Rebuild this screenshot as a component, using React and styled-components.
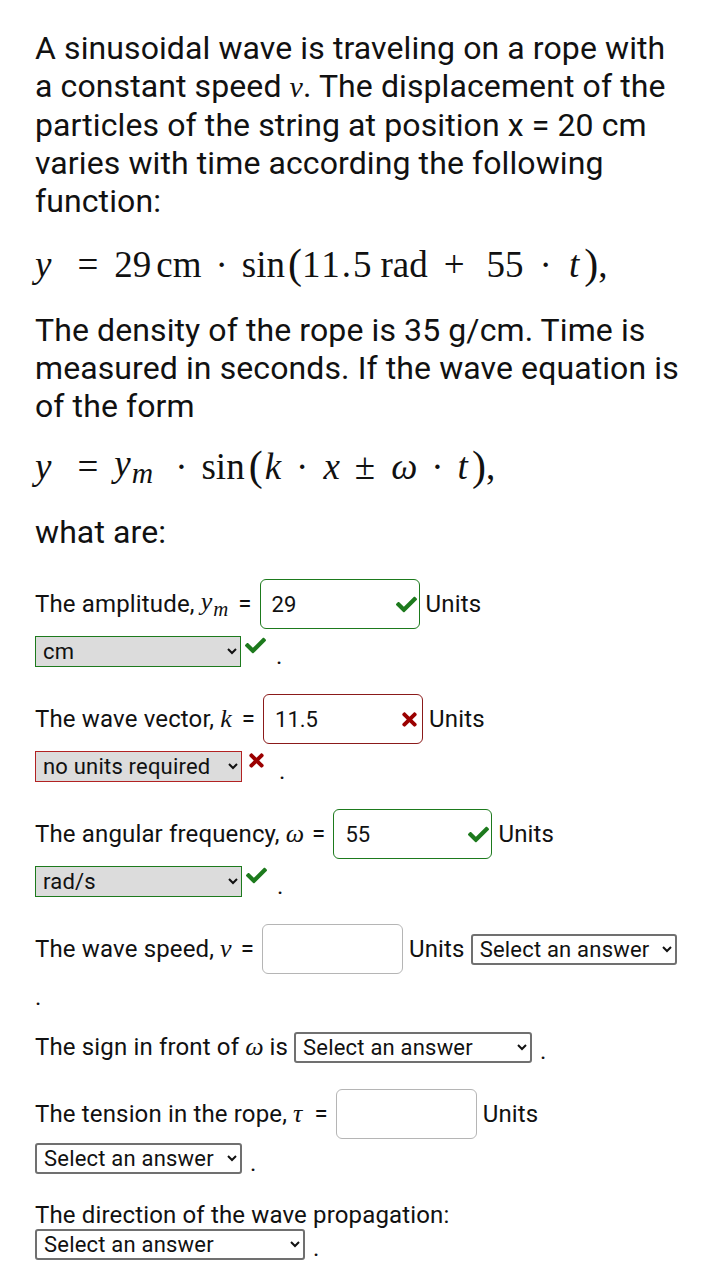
import React from "react";
import styled, { createGlobalStyle } from "styled-components";
import { FaCheck, FaTimes } from "react-icons/fa";

const GlobalStyle = createGlobalStyle`
  body {
    margin: 0;
    background: #fff;
    color: #111;
    font-family: Roboto, "Noto Sans", sans-serif;
  }
`;

const Page = styled.div`
  padding: 29px 35px 20px 35px;
`;

const Para = styled.p`
  margin: ${(p) => p.$mt || 0}px 0 0 0;
  font-size: 32px;
  letter-spacing: 0.1px;
  line-height: 38px;
  white-space: nowrap;
`;

const Equation = styled.div`
  margin-top: ${(p) => p.$mt || 0}px;
  height: 50px;
  display: flex;
  align-items: center;
  font-family: "Liberation Serif", "DejaVu Serif", serif;
  font-size: 37px;
  white-space: nowrap;
`;

const Tok = styled.span`
  margin-left: ${(p) => p.$ml || 0}px;
  font-style: ${(p) => (p.$i ? "italic" : "normal")};
  font-size: ${(p) => p.$size || "inherit"};
  letter-spacing: ${(p) => p.$ls || 0}px;
`;

const Sub = styled.sub`
  font-size: 0.8em;
  font-style: italic;
  vertical-align: -0.25em;
  margin-left: 1px;
`;

const InlineVar = styled.span`
  font-family: "Liberation Serif", "DejaVu Serif", serif;
  font-style: italic;
  font-size: ${(p) => p.$size || 26}px;
  margin: 0 ${(p) => p.$mr ?? 8}px 0 ${(p) => p.$ml ?? 6}px;
  letter-spacing: 0;
`;

const Questions = styled.div`
  margin-top: 28px;
  font-size: 24px;
  letter-spacing: 0.15px;
`;

const Question = styled.div`
  margin-top: ${(p) => p.$mt ?? 27}px;
`;

const Line = styled.div`
  display: flex;
  align-items: center;
  height: ${(p) => p.$h || 26}px;
  margin-top: ${(p) => p.$mt || 0}px;
  white-space: nowrap;
`;

const statusColor = {
  ok: "#1d7a1d",
  bad: "#8b1a1a",
  none: "#b5b5b5",
};

const InputBox = styled.div`
  display: flex;
  align-items: center;
  box-sizing: border-box;
  width: ${(p) => p.$w}px;
  height: 50px;
  border: 1px solid ${(p) => statusColor[p.$status]};
  border-radius: 6px;
  padding: 0 2px 0 11px;
  margin: 0 6px 0 8px;
`;

const TextInput = styled.input`
  flex: 1;
  min-width: 0;
  border: none;
  outline: none;
  background: transparent;
  font-family: Roboto, "Noto Sans", sans-serif;
  font-size: 22px;
  color: #111;
  padding: 0;
`;

const Select = styled.select`
  box-sizing: border-box;
  width: ${(p) => p.$w}px;
  height: 31px;
  margin: 0 ${(p) => p.$mr ?? 4}px 0 ${(p) => p.$ml || 0}px;
  font-family: Roboto, "Noto Sans", sans-serif;
  font-size: 22px;
  letter-spacing: 0.2px;
  color: #111;
  padding: 0 2px 0 3px;
  border-radius: ${(p) => (p.$status === "none" ? 3 : 0)}px;
  border: ${(p) =>
    p.$status === "ok"
      ? "1px solid #1d7a1d"
      : p.$status === "bad"
      ? "1px solid #b22222"
      : "2px solid #707070"};
  background: ${(p) => (p.$status === "none" ? "#fff" : "#dcdcdc")};
`;

const Mark = styled.span`
  display: inline-flex;
  align-self: ${(p) => (p.$top ? "flex-start" : "center")};
  margin-top: ${(p) => (p.$top ? -1 : 0)}px;
  color: ${(p) => (p.$ok ? "#1d7a1d" : "#9b0000")};
  font-size: 21px;
`;

const Dot = styled.span`
  align-self: flex-end;
  line-height: 22px;
  margin-left: ${(p) => p.$ml ?? 8}px;
`;

function Field({ w, value, status }) {
  return (
    <InputBox $w={w} $status={status}>
      <TextInput defaultValue={value} />
      {status === "ok" && (
        <Mark $ok>
          <FaCheck />
        </Mark>
      )}
      {status === "bad" && (
        <Mark>
          <FaTimes />
        </Mark>
      )}
    </InputBox>
  );
}

function Choice({ w, value, options, status, ml, mr }) {
  return (
    <Select $w={w} $status={status} $ml={ml} $mr={mr} defaultValue={value}>
      {options.map((o) => (
        <option key={o} value={o}>
          {o}
        </option>
      ))}
    </Select>
  );
}

const unitOptions = ["Select an answer", "cm", "rad/s", "no units required"];

export default function App() {
  return (
    <>
      <GlobalStyle />
      <Page>
        <Para>
          A sinusoidal wave is traveling on a rope with
          <br />a constant speed{" "}
          <InlineVar $size={30} $ml={0} $mr={0}>
            v
          </InlineVar>
          . The displacement of the
          <br />
          particles of the string at position x = 20 cm
          <br />
          varies with time according the following
          <br />
          function:
        </Para>

        <Equation $mt={19}>
          <Tok $i>y</Tok>
          <Tok $ml={26}>=</Tok>
          <Tok $ml={16}>29</Tok>
          <Tok $ml={5}>cm</Tok>
          <Tok $ml={14}>·</Tok>
          <Tok $ml={14}>sin</Tok>
          <Tok $ml={3} $size="42px">(</Tok>
          <Tok $ls={2}>11.5</Tok>
          <Tok $ml={7}>rad</Tok>
          <Tok $ml={16}>+</Tok>
          <Tok $ml={22}>55</Tok>
          <Tok $ml={16}>·</Tok>
          <Tok $ml={17} $i>t</Tok>
          <Tok $ml={5} $size="42px">)</Tok>
          <Tok>,</Tok>
        </Equation>

        <Para $mt={22}>
          The density of the rope is 35 g/cm. Time is
          <br />
          measured in seconds. If the wave equation is
          <br />
          of the form
        </Para>

        <Equation $mt={16}>
          <Tok $i>y</Tok>
          <Tok $ml={26}>=</Tok>
          <Tok $ml={16} $i>
            y<Sub>m</Sub>
          </Tok>
          <Tok $ml={22}>·</Tok>
          <Tok $ml={14}>sin</Tok>
          <Tok $ml={4} $size="42px">(</Tok>
          <Tok $ml={2} $i>k</Tok>
          <Tok $ml={15}>·</Tok>
          <Tok $ml={15} $i>x</Tok>
          <Tok $ml={15}>±</Tok>
          <Tok $ml={16} $i>ω</Tok>
          <Tok $ml={14}>·</Tok>
          <Tok $ml={14} $i>t</Tok>
          <Tok $ml={4} $size="42px">)</Tok>
          <Tok>,</Tok>
        </Equation>

        <Para $mt={22}>what are:</Para>

        <Questions>
          <Question $mt={0}>
            <Line $h={50}>
              The amplitude,
              <InlineVar $mr={10}>
                y<Sub>m</Sub>
              </InlineVar>
              =
              <Field w={160} value="29" status="ok" />
              Units
            </Line>
            <Line $h={31} $mt={7}>
              <Choice w={206} value="cm" options={unitOptions} status="ok" />
              <Mark $ok $top>
                <FaCheck />
              </Mark>
              <Dot $ml={10}>.</Dot>
            </Line>
          </Question>

          <Question>
            <Line $h={50}>
              The wave vector,<InlineVar $mr={10}>k</InlineVar>=
              <Field w={160} value="11.5" status="bad" />
              Units
            </Line>
            <Line $h={31} $mt={7}>
              <Choice
                w={207}
                value="no units required"
                options={unitOptions}
                status="bad"
              />
              <Mark $top>
                <FaTimes />
              </Mark>
              <Dot $ml={12}>.</Dot>
            </Line>
          </Question>

          <Question>
            <Line $h={50}>
              The angular frequency,<InlineVar>ω</InlineVar>=
              <Field w={159} value="55" status="ok" />
              Units
            </Line>
            <Line $h={31} $mt={7}>
              <Choice w={207} value="rad/s" options={unitOptions} status="ok" />
              <Mark $ok $top>
                <FaCheck />
              </Mark>
              <Dot $ml={10}>.</Dot>
            </Line>
          </Question>

          <Question>
            <Line $h={50}>
              The wave speed,<InlineVar $mr={9}>v</InlineVar>=
              <Field w={141} value="" status="none" />
              Units
              <Choice
                w={206}
                value="Select an answer"
                options={unitOptions}
                status="none"
                ml={6}
              />
            </Line>
            <Line $h={30} $mt={4}>
              <Dot $ml={0}>.</Dot>
            </Line>
          </Question>

          <Question $mt={24}>
            <Line $h={30}>
              The sign in front of<InlineVar $mr={6}>ω</InlineVar>is
              <Choice
                w={238}
                value="Select an answer"
                options={["Select an answer", "+", "-"]}
                status="none"
                ml={6}
              />
              <Dot $ml={4}>.</Dot>
            </Line>
          </Question>

          <Question>
            <Line $h={50}>
              The tension in the rope,<InlineVar $mr={12}>τ</InlineVar>=
              <Field w={141} value="" status="none" />
              Units
            </Line>
            <Line $h={31} $mt={4}>
              <Choice
                w={207}
                value="Select an answer"
                options={unitOptions}
                status="none"
              />
              <Dot $ml={4}>.</Dot>
            </Line>
          </Question>

          <Question>
            <Line $h={28}>The direction of the wave propagation:</Line>
            <Line $h={30} $mt={0}>
              <Choice
                w={270}
                value="Select an answer"
                options={["Select an answer", "+x direction", "-x direction"]}
                status="none"
              />
              <Dot $ml={4}>.</Dot>
            </Line>
          </Question>
        </Questions>
      </Page>
    </>
  );
}
